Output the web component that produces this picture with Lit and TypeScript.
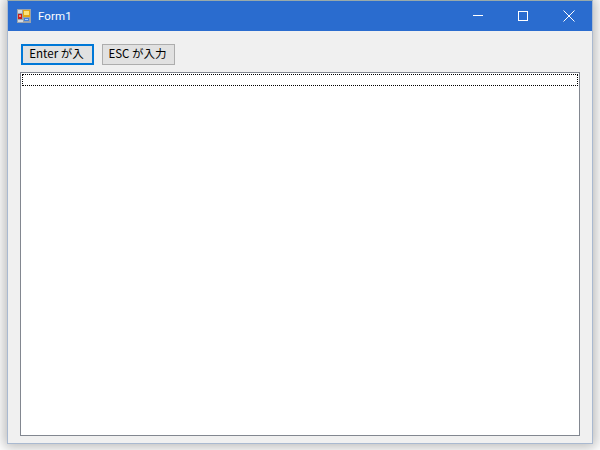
import { LitElement, html, css } from "lit";
import { customElement } from "lit/decorators.js";

@customElement("app-root")
export class AppRoot extends LitElement {
  static styles = css`
    :host { display: block; width: 600px; height: 450px; overflow: hidden; background: #fff; font-family: "Noto Sans CJK JP", "Noto Sans", sans-serif; }
    .desk { width: 600px; height: 450px; box-sizing: border-box; padding: 0 7px 6px 7px; background: #ffffff; display: flex; }
    .win { flex: 1; display: flex; flex-direction: column; border: 1px solid #a9b9d0; border-top-color: #9aa; background: #f0f0f0; box-shadow: 0 0 12px 3px rgba(0,0,0,.28); }
    .title { height: 30px; flex: none; background: #2a6ccf; display: flex; align-items: center; color: #fff; padding-right: 1px; }
    .icon { width: 14px; height: 14px; margin-left: 9px; display: block; flex: none; }
    .name { margin-left: 7px; font: 11.5px/16px Roboto, "Noto Sans", sans-serif; letter-spacing: .1px; color: #fff; flex: 1; }
    .ctl { width: 45px; height: 30px; display: flex; align-items: center; justify-content: center; }
    .ctl.close { margin-left: 1px; }
    .ctl svg { display: block; width: 12px; height: 12px; }
    .body { flex: 1; display: flex; flex-direction: column; padding: 13px 12px 7px 12px; gap: 7px; }
    .btns { display: flex; gap: 8px; padding-left: 1px; }
    .btn { width: 73px; height: 21px; box-sizing: border-box; padding-right: 2px; background: #e1e1e1; border: 1px solid #adadad; font-size: 11.5px; line-height: 16px; text-align: center; color: #000; white-space: nowrap; }
    .btn.def { border: 2px solid #0078d7; line-height: 14px; }
    .list { flex: 1; background: #fff; border: 1px solid #828790; padding: 1px 1px 0 1px; }
    .row { height: 10px; border: 1px dotted #000; }
  `;
  render() {
    return html`
      <div class="desk"><div class="win">
        <div class="title">
          <svg class="icon" viewBox="0 0 14 14" shape-rendering="crispEdges">
            <rect width="14" height="14" fill="#9aa2ac"/>
            <rect x="1" y="1" width="4" height="3" fill="#d5dae0"/>
            <rect x="1" y="11" width="5" height="2" fill="#d5dae0"/>
            <rect x="6" y="1" width="7" height="7" fill="#e0a818"/>
            <rect x="7" y="2" width="5" height="4" fill="#fbe27a"/>
            <rect x="1" y="5" width="4" height="5" fill="#c8201c"/>
            <rect x="2" y="6" width="2" height="2" fill="#f08a8a"/>
            <rect x="7" y="9" width="5" height="3" fill="#3f7fe0"/>
            <rect x="8" y="10" width="3" height="1" fill="#a8d0ff"/>
          </svg>
          <span class="name">Form1</span>
          <div class="ctl"><svg viewBox="0 0 12 12"><rect x="1" y="5" width="10" height="1" fill="#fff"/></svg></div>
          <div class="ctl"><svg viewBox="0 0 12 12"><rect x="1.500" y="1.500" width="9" height="9" fill="none" stroke="#fff"/></svg></div>
          <div class="ctl close"><svg viewBox="0 0 12 12"><path d="M.5.5l11 11M11.500.500l-11 11" stroke="#fff" fill="none"/></svg></div>
        </div>
        <div class="body">
          <div class="btns">
            <div class="btn def">Enter が入</div>
            <div class="btn">ESC が入力</div>
          </div>
          <div class="list"><div class="row"></div></div>
        </div>
      </div></div>
    `;
  }
}
